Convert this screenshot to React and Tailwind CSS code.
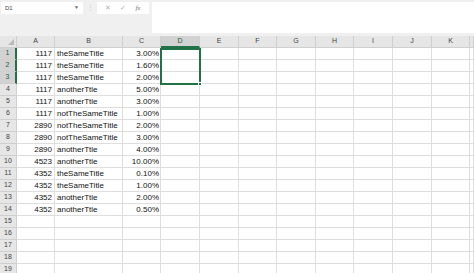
import React from 'react';

const cols = ['A', 'B', 'C', 'D', 'E', 'F', 'G', 'H', 'I', 'J', 'K', ''];

const rows = [
  ['1117', 'theSameTitle', '3.00%'],
  ['1117', 'theSameTitle', '1.60%'],
  ['1117', 'theSameTitle', '2.00%'],
  ['1117', 'anotherTtle', '5.00%'],
  ['1117', 'anotherTtle', '3.00%'],
  ['1117', 'notTheSameTitle', '1.00%'],
  ['2890', 'notTheSameTitle', '2.00%'],
  ['2890', 'notTheSameTitle', '3.00%'],
  ['2890', 'anotherTtle', '4.00%'],
  ['4523', 'anotherTtle', '10.00%'],
  ['4352', 'theSameTitle', '0.10%'],
  ['4352', 'theSameTitle', '1.00%'],
  ['4352', 'anotherTtle', '2.00%'],
  ['4352', 'anotherTtle', '0.50%'],
  ['', '', ''],
  ['', '', ''],
  ['', '', ''],
  ['', '', ''],
  ['', '', ''],
];

const App = () => {
  return (
    <div
      className="w-[474px] h-[273px] overflow-hidden bg-white flex flex-col"
      style={{ fontFamily: '"Liberation Sans", Arial, sans-serif' }}
    >
      {/* formula bar */}
      <div className="h-[36px] bg-[#f0f0f0] flex items-start shrink-0">
        <div className="mt-[2px] ml-[1px] w-[82px] h-[12px] bg-white flex items-center justify-between px-[4px]">
          <span className="text-[6px] text-[#444]">D1</span>
          <span className="text-[5px] text-[#666]">▼</span>
        </div>
        <div className="w-[14px] h-[16px] flex items-center justify-center text-[7px] text-[#c8c8c8]">⋮</div>
        <div className="mt-[2px] w-[52px] h-[12px] bg-white flex items-center justify-around px-[4px] text-[7px] text-[#b4b4b4]">
          <span>✕</span>
          <span>✓</span>
          <span className="italic text-[#777]" style={{ fontFamily: '"Liberation Serif", serif' }}>fx</span>
        </div>
        <div className="mt-[2px] ml-[3px] flex-1 h-[31px] bg-white"></div>
      </div>

      {/* sheet */}
      <div className="relative flex-1">
        <div className="grid grid-cols-[17px_38px_68px_38px_39px_39px_38px_39px_38px_39px_39px_38px_1fr] auto-rows-[12px] text-[8px] text-[#111]">
          {/* header row */}
          <div className="bg-[#e6e6e6] border-r border-b border-[#cfcfcf] relative">
            <div className="absolute right-[2px] bottom-[2px] w-0 h-0 border-l-[6px] border-l-transparent border-b-[6px] border-b-[#b9b9b9]"></div>
          </div>
          {cols.map((c, i) => (
            <div
              key={c + i}
              className={
                c === 'D'
                  ? 'bg-[#d2d2d2] border-r border-[#cfcfcf] border-b-2 border-b-[#217346] flex items-center justify-center text-[7px] text-[#1f5f3a]'
                  : 'bg-[#e6e6e6] border-r border-b border-[#cfcfcf] flex items-center justify-center text-[7px] text-[#444]'
              }
            >
              {c}
            </div>
          ))}

          {rows.map((r, ri) => (
            <React.Fragment key={ri}>
              <div
                className={
                  ri < 3
                    ? 'bg-[#d2d2d2] border-b border-[#cfcfcf] border-r-2 border-r-[#217346] flex items-center justify-center text-[7px] text-[#1f5f3a]'
                    : 'bg-[#e6e6e6] border-r border-b border-[#cfcfcf] flex items-center justify-center text-[7px] text-[#444]'
                }
              >
                {ri + 1}
              </div>
              <div className="border-r border-b border-[#dedede] flex items-center justify-end pr-[2px]">{r[0]}</div>
              <div className="border-r border-b border-[#dedede] flex items-center pl-[2px] whitespace-nowrap">{r[1]}</div>
              <div className="border-r border-b border-[#dedede] flex items-center justify-end pr-[1px]">{r[2]}</div>
              {cols.slice(3).map((c, ci) => (
                <div key={ci} className="border-r border-b border-[#dedede]"></div>
              ))}
            </React.Fragment>
          ))}
        </div>

        {/* selection D1:D3 */}
        <div className="absolute left-[160px] top-[12px] w-[41px] h-[37px] border-2 border-[#217346]">
          <div className="absolute -right-[3px] -bottom-[3px] w-[4px] h-[4px] bg-[#217346] border border-white"></div>
        </div>
      </div>
    </div>
  );
};

export default App;
